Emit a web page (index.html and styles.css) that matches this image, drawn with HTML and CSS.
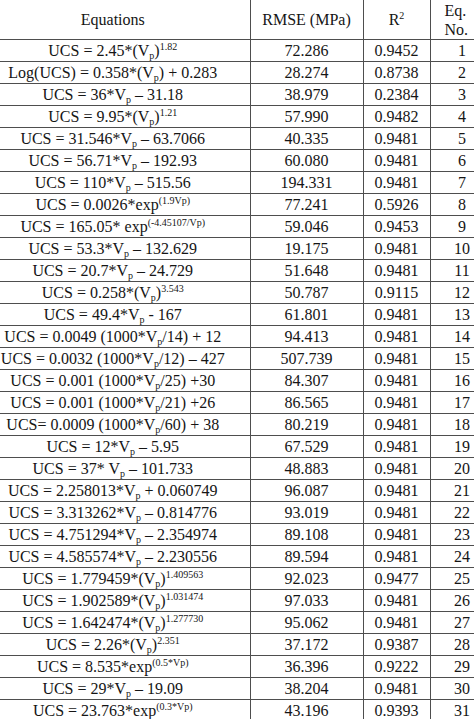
FILE: index.html
```html
<!DOCTYPE html>
<html>
<head>
<meta charset="utf-8">
<link rel="stylesheet" href="styles.css">
</head>
<body>
<table class="tbl">
<colgroup><col class="c1"><col class="c2"><col class="c3"><col class="c4"></colgroup>
<thead>
<tr><th>Equations</th><th>RMSE (MPa)</th><th>R<sup>2</sup></th><th class="eq">Eq.<br>No.</th></tr>
</thead>
<tbody>
<tr><td>UCS = 2.45*(V<sub>p</sub>)<sup>1.82</sup></td><td>72.286</td><td>0.9452</td><td>1</td></tr>
<tr><td>Log(UCS) = 0.358*(V<sub>p</sub>) + 0.283</td><td>28.274</td><td>0.8738</td><td>2</td></tr>
<tr><td>UCS = 36*V<sub>p</sub> – 31.18</td><td>38.979</td><td>0.2384</td><td>3</td></tr>
<tr><td>UCS = 9.95*(V<sub>p</sub>)<sup>1.21</sup></td><td>57.990</td><td>0.9482</td><td>4</td></tr>
<tr><td>UCS = 31.546*V<sub>p</sub> – 63.7066</td><td>40.335</td><td>0.9481</td><td>5</td></tr>
<tr><td>UCS = 56.71*V<sub>p</sub> – 192.93</td><td>60.080</td><td>0.9481</td><td>6</td></tr>
<tr><td>UCS = 110*V<sub>p</sub> – 515.56</td><td>194.331</td><td>0.9481</td><td>7</td></tr>
<tr><td>UCS = 0.0026*exp<sup>(1.9Vp)</sup></td><td>77.241</td><td>0.5926</td><td>8</td></tr>
<tr><td>UCS = 165.05* exp<sup>(-4.45107/Vp)</sup></td><td>59.046</td><td>0.9453</td><td>9</td></tr>
<tr><td>UCS = 53.3*V<sub>p</sub> – 132.629</td><td>19.175</td><td>0.9481</td><td>10</td></tr>
<tr><td>UCS = 20.7*V<sub>p</sub> – 24.729</td><td>51.648</td><td>0.9481</td><td>11</td></tr>
<tr><td>UCS = 0.258*(V<sub>p</sub>)<sup>3.543</sup></td><td>50.787</td><td>0.9115</td><td>12</td></tr>
<tr><td>UCS = 49.4*V<sub>p</sub> - 167</td><td>61.801</td><td>0.9481</td><td>13</td></tr>
<tr><td>UCS = 0.0049 (1000*V<sub>p</sub>/14) + 12</td><td>94.413</td><td>0.9481</td><td>14</td></tr>
<tr><td>UCS = 0.0032 (1000*V<sub>p</sub>/12) – 427</td><td>507.739</td><td>0.9481</td><td>15</td></tr>
<tr><td>UCS = 0.001 (1000*V<sub>p</sub>/25) +30</td><td>84.307</td><td>0.9481</td><td>16</td></tr>
<tr><td>UCS = 0.001 (1000*V<sub>p</sub>/21) +26</td><td>86.565</td><td>0.9481</td><td>17</td></tr>
<tr><td>UCS= 0.0009 (1000*V<sub>p</sub>/60) + 38</td><td>80.219</td><td>0.9481</td><td>18</td></tr>
<tr><td>UCS = 12*V<sub>p</sub> – 5.95</td><td>67.529</td><td>0.9481</td><td>19</td></tr>
<tr><td>UCS = 37* V<sub>p</sub> – 101.733</td><td>48.883</td><td>0.9481</td><td>20</td></tr>
<tr><td>UCS = 2.258013*V<sub>p</sub> + 0.060749</td><td>96.087</td><td>0.9481</td><td>21</td></tr>
<tr><td>UCS = 3.313262*V<sub>p</sub> – 0.814776</td><td>93.019</td><td>0.9481</td><td>22</td></tr>
<tr><td>UCS = 4.751294*V<sub>p</sub> – 2.354974</td><td>89.108</td><td>0.9481</td><td>23</td></tr>
<tr><td>UCS = 4.585574*V<sub>p</sub> – 2.230556</td><td>89.594</td><td>0.9481</td><td>24</td></tr>
<tr><td>UCS = 1.779459*(V<sub>p</sub>)<sup>1.409563</sup></td><td>92.023</td><td>0.9477</td><td>25</td></tr>
<tr><td>UCS = 1.902589*(V<sub>p</sub>)<sup>1.031474</sup></td><td>97.033</td><td>0.9481</td><td>26</td></tr>
<tr><td>UCS = 1.642474*(V<sub>p</sub>)<sup>1.277730</sup></td><td>95.062</td><td>0.9481</td><td>27</td></tr>
<tr><td>UCS = 2.26*(V<sub>p</sub>)<sup>2.351</sup></td><td>37.172</td><td>0.9387</td><td>28</td></tr>
<tr><td>UCS = 8.535*exp<sup>(0.5*Vp)</sup></td><td>36.396</td><td>0.9222</td><td>29</td></tr>
<tr><td>UCS = 29*V<sub>p</sub> – 19.09</td><td>38.204</td><td>0.9481</td><td>30</td></tr>
<tr><td>UCS = 23.763*exp<sup>(0.3*Vp)</sup></td><td>43.196</td><td>0.9393</td><td>31</td></tr>
</tbody>
</table>
</body>
</html>
```
FILE: styles.css
```css
html, body {
  margin: 0;
  padding: 0;
  background: #ffffff;
  overflow: hidden;
}
body {
  width: 474px;
  height: 719px;
}
.tbl {
  border-collapse: collapse;
  table-layout: fixed;
  width: 518px;
  margin-left: -24px;
  font-family: "Liberation Serif", "Times New Roman", serif;
  font-size: 16px;
  color: #151515;
}
.c1 { width: 274px; }
.c2 { width: 113px; }
.c3 { width: 67px; }
.c4 { width: 64px; }
.tbl th, .tbl td {
  padding: 0;
  text-align: center;
  white-space: nowrap;
  overflow: visible;
  border-right: 1px solid #4e4e4e;
  border-bottom: 1px solid #4e4e4e;
  font-weight: normal;
  line-height: 20px;
}
.tbl th {
  height: 39px;
}
.tbl th.eq {
  text-align: left;
  padding-left: 14px;
  line-height: 19px;
}
.tbl td {
  height: 21px;
}
sup {
  font-size: 10px;
  line-height: 0;
  vertical-align: 6px;
}
sub {
  font-size: 10px;
  line-height: 0;
  vertical-align: -3px;
}
```
